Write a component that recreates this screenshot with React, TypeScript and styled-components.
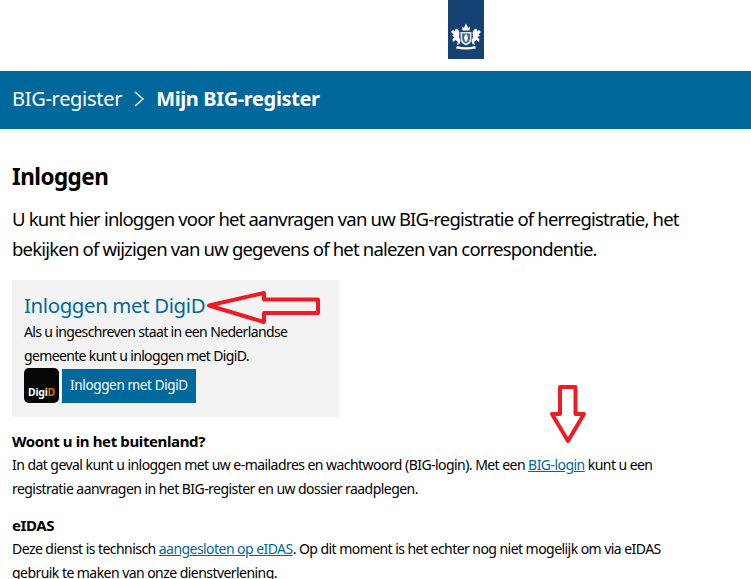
import React from "react";
import styled, { createGlobalStyle } from "styled-components";

const Global = createGlobalStyle`
  html, body { margin: 0; padding: 0; background: #fff; }
  body { width: 751px; height: 579px; overflow: hidden; font-family: "Noto Sans", "Open Sans", sans-serif; color: #000; }
`;

const Page = styled.div`
  position: relative;
  width: 751px;
  height: 579px;
  overflow: hidden;
`;

const LogoRow = styled.div`
  height: 71px;
  display: flex;
  justify-content: center;
  padding-left: 181px;
  box-sizing: border-box;
`;

const LogoBlock = styled.div`
  width: 36px;
  height: 59px;
  background: #154273;
  display: flex;
  align-items: flex-end;
  justify-content: center;
  padding-bottom: 9px;
  box-sizing: border-box;
`;

const Band = styled.div`
  height: 58px;
  background: #01689b;
  display: flex;
  align-items: center;
  padding: 0 12px 3px;
  box-sizing: border-box;
  color: #fff;
  font-size: 20px;
  letter-spacing: -0.3px;
`;

const Crumb = styled.span`
  font-weight: 400;
`;

const CrumbStrong = styled.strong`
  font-weight: 700;
  letter-spacing: -0.36px;
`;

const Chevron = styled.svg`
  width: 12px;
  height: 16px;
  margin: 0 11px 0 11px;
`;

const Main = styled.main`
  padding: 33px 12px 0;
`;

const H1 = styled.h1`
  margin: 0;
  font-size: 22.5px;
  line-height: 30px;
  font-weight: 700;
  letter-spacing: -0.55px;
`;

const Intro = styled.p`
  margin: 12px 0 0;
  font-size: 18.5px;
  line-height: 30px;
  letter-spacing: -0.81px;
  width: 700px;
`;

const Card = styled.section`
  margin-top: 16px;
  width: 327px;
  height: 137px;
  background: #f3f3f3;
  padding: 11px 12px 0;
  box-sizing: border-box;
`;

const CardTitle = styled.h2`
  margin: 0;
  font-size: 20.4px;
  line-height: 29px;
  font-weight: 400;
  color: #01689b;
  letter-spacing: -0.36px;
`;

const CardText = styled.p`
  margin: 0;
  font-size: 14px;
  line-height: 24px;
  letter-spacing: -0.64px;
`;

const LoginRow = styled.div`
  display: flex;
  align-items: flex-end;
  gap: 3px;
`;

const DigiDTile = styled.div`
  width: 35px;
  height: 35px;
  border-radius: 5px;
  background: #050505;
  display: flex;
  align-items: flex-end;
  justify-content: center;
  padding-bottom: 5px;
  box-sizing: border-box;
  color: #fff;
  font-size: 10.5px;
  font-weight: 700;
  letter-spacing: -0.3px;
  line-height: 12px;
`;

const DigiDAccent = styled.span`
  color: #e17000;
`;

const LoginButton = styled.button`
  width: 134px;
  height: 34px;
  border: 0;
  padding: 0 0 2px;
  background: #01689b;
  color: #fff;
  font-family: inherit;
  font-size: 13.5px;
  letter-spacing: -0.36px;
`;

const SectionTitle = styled.h3<{ $top: number }>`
  margin: ${(p) => p.$top}px 0 0;
  font-size: 15px;
  line-height: 24px;
  font-weight: 700;
  letter-spacing: -0.38px;
`;

const Body = styled.p`
  margin: 0;
  font-size: 14px;
  line-height: 24px;
  letter-spacing: -0.55px;
  width: 690px;
`;

const Link = styled.a`
  color: #01689b;
  text-decoration: underline;
`;

const Overlay = styled.svg`
  position: absolute;
  left: 0;
  top: 0;
  width: 751px;
  height: 579px;
  pointer-events: none;
`;

const Crest = () => (
  <svg width="32" height="27" viewBox="0 0 32 27" fill="#fff">
    {/* crown */}
    <path d="M12.5 7.5 L12 3.5 L14 5 L15 2.5 L16 0.5 L17 2.5 L18 5 L20 3.5 L19.5 7.5 Z" />
    {/* shield */}
    <path d="M10.5 9 H21.5 V16 Q21.5 20.5 16 22.5 Q10.5 20.5 10.5 16 Z" fill="#dfe6ee" />
    <path d="M12.2 10.5 H19.8 V15.5 Q19.8 18.6 16 20.4 Q12.2 18.6 12.2 15.5 Z" fill="#3e6088" />
    <path d="M15 11.5 h2 l1 3 -1 4 h-2 l-1 -4 Z" />
    {/* lions */}
    <path d="M1 9 L3 7 L4.5 8 L6 5.5 L8.5 7 L9.5 10 L9 14 L10.5 18 L9.5 21 L7 22 L8 19 L5.5 17 L3 19 L2.5 16.5 L4.5 14 L2 13 L3.5 11.5 Z" />
    <path d="M31 9 L29 7 L27.5 8 L26 5.5 L23.5 7 L22.5 10 L23 14 L21.5 18 L22.5 21 L25 22 L24 19 L26.5 17 L29 19 L29.5 16.5 L27.5 14 L30 13 L28.5 11.5 Z" />
    {/* ribbon */}
    <path d="M7 23 Q16 25.5 25 23 L26 25.5 Q16 27.5 6 25.5 Z" />
  </svg>
);

export default function App() {
  return (
    <Page>
      <Global />
      <LogoRow>
        <LogoBlock>
          <Crest />
        </LogoBlock>
      </LogoRow>
      <Band>
        <Crumb>BIG-register</Crumb>
        <Chevron viewBox="0 0 12 16" fill="none" stroke="#fff" strokeWidth="1.4">
          <path d="M2 1 L10 8 L2 15" />
        </Chevron>
        <CrumbStrong>Mijn BIG-register</CrumbStrong>
      </Band>
      <Main>
        <H1>Inloggen</H1>
        <Intro>
          U kunt hier inloggen voor het aanvragen van uw BIG-registratie of herregistratie, het
          bekijken of wijzigen van uw gegevens of het nalezen van correspondentie.
        </Intro>
        <Card>
          <CardTitle>Inloggen met DigiD</CardTitle>
          <CardText>
            Als u ingeschreven staat in een Nederlandse
            <br />
            gemeente kunt u inloggen met DigiD.
          </CardText>
          <LoginRow>
            <DigiDTile>
              Digi<DigiDAccent>D</DigiDAccent>
            </DigiDTile>
            <LoginButton>Inloggen met DigiD</LoginButton>
          </LoginRow>
        </Card>
        <SectionTitle $top={12}>Woont u in het buitenland?</SectionTitle>
        <Body>
          In dat geval kunt u inloggen met uw e-mailadres en wachtwoord (BIG-login). Met een{" "}
          <Link href="#">BIG-login</Link> kunt u een registratie aanvragen in het BIG-register en uw
          dossier raadplegen.
        </Body>
        <SectionTitle $top={12}>eIDAS</SectionTitle>
        <Body>
          Deze dienst is technisch <Link href="#">aangesloten op eIDAS</Link>. Op dit moment is het
          echter nog niet mogelijk om via eIDAS gebruik te maken van onze dienstverlening.
        </Body>
      </Main>
      <Overlay viewBox="0 0 751 579" fill="none" stroke="#ed1c24" strokeWidth="4" strokeLinejoin="round">
        <path d="M209 305.5 L264 293 V299.5 H318 V313 H264 V322 Z" />
        <path d="M560 387 H575.5 V414 H584 L568 441 L552 414 H560 Z" />
      </Overlay>
    </Page>
  );
}
